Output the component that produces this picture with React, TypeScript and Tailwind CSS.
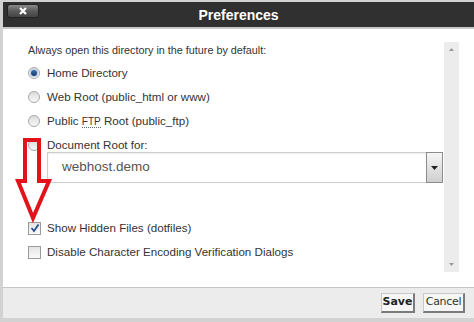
import React from "react";

function Radio({ checked }: { checked?: boolean }) {
  return (
    <div className="w-[12px] h-[12px] rounded-full border border-[#a8a8a8] bg-gradient-to-b from-[#dcdcdc] to-[#f8f8f8] flex items-center justify-center shrink-0">
      {checked && (
        <div className="w-[6px] h-[6px] rounded-full bg-gradient-to-b from-[#3a6fb0] to-[#163a6b] shadow-[0_0_0_1px_#b9cde6]" />
      )}
    </div>
  );
}

function Check({ checked }: { checked?: boolean }) {
  return (
    <div className="w-[13px] h-[13px] border border-[#9a9a9a] bg-gradient-to-b from-[#e4e4e4] to-[#fafafa] flex items-center justify-center shrink-0">
      {checked && (
        <svg width="10" height="10" viewBox="0 0 10 10">
          <path d="M1.5 5 L4 8 L8.5 1.5" fill="none" stroke="#2a4f8a" strokeWidth="1.8" />
        </svg>
      )}
    </div>
  );
}

export default function App() {
  return (
    <div className="w-[474px] h-[322px] bg-[#d2d2d2] overflow-hidden relative font-['Liberation_Sans',Arial,sans-serif] text-[11.6px] text-[#333]">
      <div className="flex flex-col pl-[3px] pt-[2px]">
        {/* title bar */}
        <div className="relative h-[25px] bg-[#303030] flex items-center justify-center">
          <div className="absolute left-[4px] top-[2px] w-[32px] h-[14px] rounded-[3px] bg-gradient-to-b from-[#8a8a8a] via-[#5a5a5a] to-[#444] border border-[#222] flex items-center justify-center">
            <svg width="8" height="8" viewBox="0 0 8 8">
              <path d="M1 1 L7 7 M7 1 L1 7" stroke="#fff" strokeWidth="2.2" />
            </svg>
          </div>
          <span className="text-white font-bold text-[14px] mt-[1px]">Preferences</span>
        </div>
        <div className="h-[2px] bg-[#c8c8c8]" />
        {/* body */}
        <div className="h-[258px] bg-white flex flex-row pt-[13px]">
          <div className="w-[441px] pl-[25px] flex flex-col">
            <div className="h-[16px] flex items-center text-[10.8px]">
              Always open this directory in the future by default:
            </div>
            <div className="h-[3px]" />
            <div className="h-[24px] flex items-center gap-[7px]">
              <Radio checked />
              <span>Home Directory</span>
            </div>
            <div className="h-[24px] flex items-center gap-[7px]">
              <Radio />
              <span>Web Root (public_html or www)</span>
            </div>
            <div className="h-[23px] flex items-center gap-[7px]">
              <Radio />
              <span>
                Public{" "}
                <span className="text-[10px] border-b border-dotted border-[#666] leading-[10px]">FTP</span>{" "}
                Root (public_ftp)
              </span>
            </div>
            <div className="h-[20px] pt-[6px] flex items-center gap-[7px]">
              <Radio />
              <span>Document Root for:</span>
            </div>
            <div className="ml-[19px] w-[396px] h-[31px] border border-[#cdcdcd] shadow-[inset_0_1px_2px_#eee] flex items-center">
              <span className="flex-1 pl-[14px] text-[13.5px] text-[#555]">webhost.demo</span>
              <div className="w-[17px] h-[31px] -mr-[1px] border border-[#8c8c8c] bg-gradient-to-b from-[#f6f6f6] to-[#cfcfcf] flex items-center justify-center">
                <svg width="7" height="4" viewBox="0 0 7 4">
                  <path d="M0 0 L7 0 L3.5 4 Z" fill="#222" />
                </svg>
              </div>
            </div>
            <div className="h-[33px]" />
            <div className="h-[24px] flex items-center gap-[6px]">
              <Check checked />
              <span>Show Hidden Files (dotfiles)</span>
            </div>
            <div className="h-[24px] flex items-center gap-[6px]">
              <Check />
              <span>Disable Character Encoding Verification Dialogs</span>
            </div>
          </div>
          <div className="w-[15px] h-[230px] bg-[#ececec] flex flex-col items-center justify-between py-[6px]">
            <svg width="5" height="3" viewBox="0 0 5 3">
              <path d="M0 3 L5 3 L2.5 0 Z" fill="#9a9a9a" />
            </svg>
            <svg width="5" height="3" viewBox="0 0 5 3">
              <path d="M0 0 L5 0 L2.5 3 Z" fill="#9a9a9a" />
            </svg>
          </div>
        </div>
        {/* footer */}
        <div className="h-[31px] bg-[#ececec] border-t border-[#c4c4c4] flex items-center justify-end gap-[8px] pr-[9px] font-['DejaVu_Sans',Verdana,sans-serif] text-[11px]">
          <div className="h-[20px] w-[34px] justify-center flex items-center bg-[#f6f6f6] border border-[#c8c8c8] border-r-[2px] border-b-[2px] border-r-[#7a7a7a] border-b-[#7a7a7a] font-bold text-[#222]">
            Save
          </div>
          <div className="h-[20px] w-[42px] justify-center flex items-center bg-[#f6f6f6] border border-[#c8c8c8] border-r-[2px] border-b-[2px] border-r-[#7a7a7a] border-b-[#7a7a7a] text-[#333] tracking-[-0.3px]">
            Cancel
          </div>
        </div>
      </div>
      {/* red arrow overlay */}
      <svg className="absolute left-0 top-0" width="60" height="230" viewBox="0 0 60 230">
        <polygon
          points="25,140 39,140 39,181 49,181 33,218 18,181 25,181"
          fill="none"
          stroke="#e2131b"
          strokeWidth="4"
          strokeLinejoin="miter"
        />
      </svg>
    </div>
  );
}
